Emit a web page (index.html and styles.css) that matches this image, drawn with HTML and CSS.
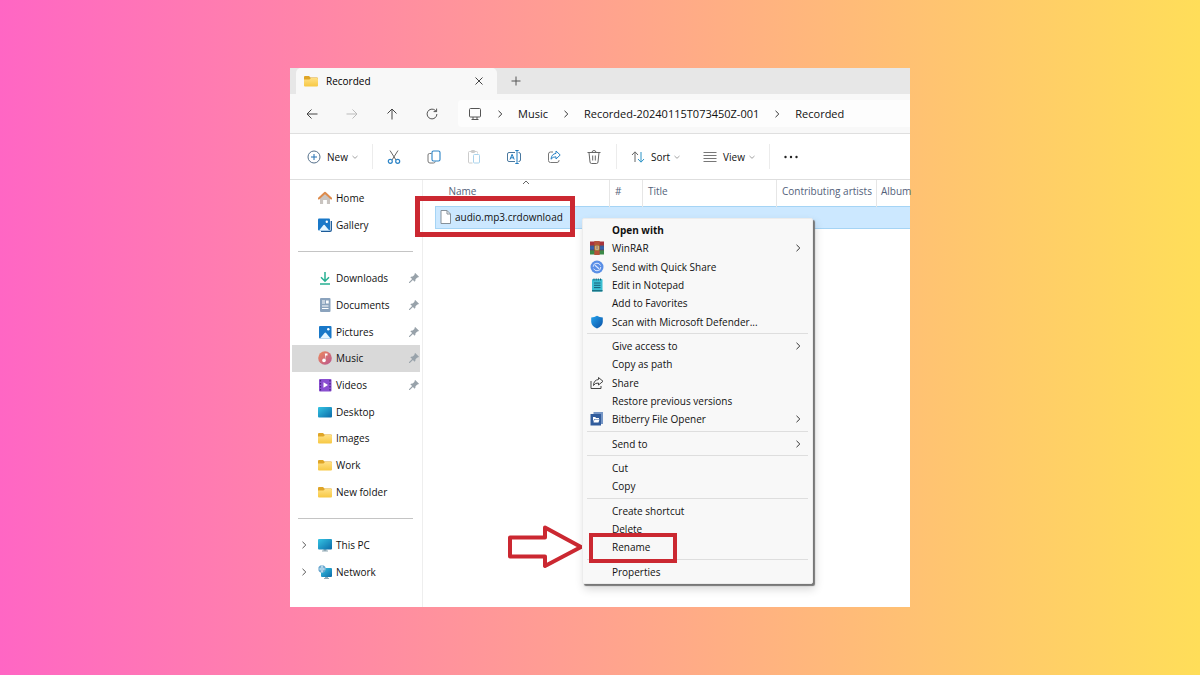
FILE: index.html
```
<!DOCTYPE html>
<html lang="en">
<head>
<meta charset="utf-8">
<title>Recorded</title>
<link rel="stylesheet" href="styles.css">
</head>
<body>
<svg class="defs" aria-hidden="true">
  <defs>
    <linearGradient id="gFolder" x1="0" y1="0" x2="0" y2="1"><stop offset="0" stop-color="#ffe085"/><stop offset="1" stop-color="#f7c843"/></linearGradient>
    <linearGradient id="gBlue" x1="0" y1="0" x2="1" y2="1"><stop offset="0" stop-color="#35c5e4"/><stop offset="1" stop-color="#0b6aa8"/></linearGradient>
    <linearGradient id="gMusic" x1="0" y1="0" x2="1" y2="1"><stop offset="0" stop-color="#ee8a5c"/><stop offset="1" stop-color="#b95590"/></linearGradient>
    <linearGradient id="gShield" x1="0" y1="0" x2="1" y2="1"><stop offset="0" stop-color="#25a4ef"/><stop offset="1" stop-color="#0a4fa3"/></linearGradient>
    <symbol id="folder" viewBox="0 0 14 14"><path d="M0 3q0-1 1-1h4l1.500 1.500H13q1 0 1 1V6H0z" fill="#dfa527"/><path d="M0 5.500h5.500L7 4h6q1 0 1 1v6.500q0 1-1 1H1q-1 0-1-1z" fill="url(#gFolder)"/></symbol>
    <symbol id="right" viewBox="0 0 10 10"><path d="M3.500 1.800 6.800 5 3.500 8.200" fill="none" stroke="currentColor" stroke-width="1"/></symbol>
    <symbol id="down" viewBox="0 0 8 8"><path d="M1.500 3 4 5.300 6.500 3" fill="none" stroke="#999" stroke-width=".9"/></symbol>
    <symbol id="pin" viewBox="0 0 12 12"><path d="M7.200 1 11 4.800 10 5.600 9.300 5.400 7.500 7.300Q7.800 8.800 6.700 9.700L4.900 7.900 1.800 11 1 11 1 10.200 4.100 7.100 2.300 5.300Q3.200 4.200 4.700 4.500L6.600 2.700 6.400 2z" fill="#98a2aa"/></symbol>
  </defs>
</svg>

<main class="stage">
  <section class="window" aria-label="File Explorer">
    <header class="tabs">
      <div class="tab">
        <svg class="ico"><use href="#folder"/></svg>
        <span class="tab-title">Recorded</span>
        <button class="tab-btn" aria-label="Close tab"><svg viewBox="0 0 10 10"><path d="M1.500 1.500l7 7M8.500 1.500l-7 7" stroke="#444" fill="none"/></svg></button>
      </div>
      <button class="tab-btn new-tab" aria-label="New tab"><svg viewBox="0 0 10 10"><path d="M5 .5v9M.5 5h9" stroke="#555" fill="none"/></svg></button>
    </header>

    <nav class="navbar" aria-label="Location">
      <button class="sq" aria-label="Back"><svg class="ico" viewBox="0 0 14 14"><path d="M12.500 7H2M6.500 2.500 2 7l4.500 4.500" stroke="#444" fill="none"/></svg></button>
      <button class="sq" aria-label="Forward" disabled><svg class="ico" viewBox="0 0 14 14"><path d="M1.500 7H12M7.500 2.500 12 7l-4.500 4.500" stroke="#bbb" fill="none"/></svg></button>
      <button class="sq" aria-label="Up"><svg class="ico" viewBox="0 0 14 14"><path d="M7 12.500V2M2.500 6.500 7 2l4.500 4.500" stroke="#444" fill="none"/></svg></button>
      <button class="sq" aria-label="Refresh"><svg class="ico" viewBox="0 0 14 14"><path d="M11.900 7A4.900 4.900 0 1 1 10.200 3.300L11.500 4.500M11.600 1.600v3h-3" stroke="#555" fill="none"/></svg></button>
      <div class="address">
        <svg class="ico" viewBox="0 0 14 14"><path d="M2.500 1.500h9q1 0 1 1v6.500q0 1-1 1h-9q-1 0-1-1V2.500q0-1 1-1zM5 10v2.500M9 10v2.500M3.500 12.500h7" stroke="#555" fill="none"/></svg>
        <svg class="sep"><use href="#right"/></svg>
        <a href="#">Music</a>
        <svg class="sep"><use href="#right"/></svg>
        <a href="#">Recorded-20240115T073450Z-001</a>
        <svg class="sep"><use href="#right"/></svg>
        <a href="#">Recorded</a>
      </div>
    </nav>

    <div class="toolbar" role="toolbar" aria-label="Commands">
      <button class="labelled"><svg class="ico" viewBox="0 0 14 14" fill="none"><circle cx="7" cy="7" r="6" stroke="#56718c"/><path d="M7 4v6M4 7h6" stroke="#2270b4"/></svg><span>New</span><svg class="chev"><use href="#down"/></svg></button>
      <span class="divider"></span>
      <button class="sq" aria-label="Cut"><svg class="big" viewBox="0 0 16 16" fill="none"><path d="M4 1.500 10 11M12 1.500 6 11" stroke="#666"/><circle cx="4.300" cy="12.300" r="2" stroke="#2b83c6" stroke-width="1.200"/><circle cx="11.700" cy="12.300" r="2" stroke="#2b83c6" stroke-width="1.200"/></svg></button>
      <button class="sq" aria-label="Copy"><svg class="big" viewBox="0 0 16 16" fill="none"><path d="M5.500 4.500h-2q-1.500 0-1.500 1.500v6q0 2 2 2h3.500q1.500 0 1.800-1.500" stroke="#777"/><rect x="6" y="2" width="8" height="10" rx="1.500" stroke="#2b83c6" stroke-width="1.100"/></svg></button>
      <button class="sq" aria-label="Paste" disabled><svg class="big" viewBox="0 0 16 16" fill="none"><path d="M6.500 14H3.500q-1 0-1-1V3.500q0-1 1-1h7q1 0 1 1v1" stroke="#ccc"/><rect x="5" y="1.500" width="4" height="2" rx="1" stroke="#ccc"/><rect x="7.500" y="5.500" width="6" height="8.500" rx="1" stroke="#a9d3ec"/></svg></button>
      <button class="sq" aria-label="Rename"><svg class="big" viewBox="0 0 16 16" fill="none"><path d="M9 3.500H3q-1.500 0-1.500 1.500v6q0 1.500 1.500 1.500h6M12.500 3.500q2 0 2 1.500v6q0 1.500-2 1.500" stroke="#49789f"/><path d="M4 10.500 6.100 5.300 8.200 10.500M4.800 8.800h2.600M9.300 1.500h3.400M11 1.500v13M9.300 14.500h3.400" stroke="#217cbf"/></svg></button>
      <button class="sq" aria-label="Share"><svg class="big" viewBox="0 0 16 16" fill="none"><path d="M7 3H4.500Q2.500 3 2.500 5v6.500q0 2 2 2H11q2 0 2-2V11" stroke="#777"/><path d="M10 2l4.200 4L10 10V7.800Q6.800 7.600 5 10.200 5.500 5 10 4.400z" stroke="#2b83c6" stroke-linejoin="round"/></svg></button>
      <button class="sq" aria-label="Delete"><svg class="big" viewBox="0 0 16 16" fill="none"><path d="M1.500 3.500h13M6 3.500Q6 1.500 8 1.500t2 2M3 3.500 4 13q.1 1.500 1.500 1.500h5q1.400 0 1.500-1.500l1-9.500M6.700 6.500v5M9.300 6.500v5" stroke="#666"/></svg></button>
      <span class="divider"></span>
      <button class="labelled"><svg class="ico" viewBox="0 0 14 14" fill="none"><path d="M4 12V2M1 5l3-3.200L7 5" stroke="#666"/><path d="M10 2v10M7 9l3 3.200L13 9" stroke="#2b93c6"/></svg><span>Sort</span><svg class="chev"><use href="#down"/></svg></button>
      <button class="labelled"><svg class="ico" viewBox="0 0 14 14"><path d="M.5 2.500h13M.5 5.500h13M.5 8.500h13M.5 11.500h13" stroke="#777"/></svg><span>View</span><svg class="chev"><use href="#down"/></svg></button>
      <span class="divider"></span>
      <button class="sq" aria-label="See more"><svg class="big" viewBox="0 0 16 16" fill="#222"><circle cx="2.500" cy="8" r="1.200"/><circle cx="8" cy="8" r="1.200"/><circle cx="13.500" cy="8" r="1.200"/></svg></button>
    </div>

    <div class="body">
      <nav class="sidebar" aria-label="Folders">
        <a class="item" href="#"><svg class="ico" viewBox="0 0 14 14"><path d="M2 6.500 7 2l5 4.500V13H8.700V9H5.300v4H2z" fill="#c9c4c0"/><path d="M5.300 9h3.400v4H5.300z" fill="#fff"/><path d="M.8 7.500 7 1.800l6.200 5.700" fill="none" stroke="#dd8b4c" stroke-width="2" stroke-linecap="round" stroke-linejoin="round"/></svg><span>Home</span></a>
        <a class="item" href="#"><svg class="ico" viewBox="0 0 14 14"><path d="M3 13.300h9q1.300 0 1.300-1.300V3" fill="none" stroke="#1b5a98" stroke-width="1.300"/><rect width="12" height="12" y=".5" rx="1" fill="#1978c8"/><path d="M1 12.500 5.500 7q.6-.6 1.200 0l4.500 5.500z" fill="#e4f5ff"/><circle cx="8.800" cy="3.800" r="1.200" fill="#fff"/></svg><span>Gallery</span></a>
        <hr>
        <a class="item" href="#"><svg class="ico" viewBox="0 0 14 14"><path d="M7 1v9M3 6.200l4 4 4-4M2 13h10" fill="none" stroke="#27b092" stroke-width="1.500"/></svg><span>Downloads</span><svg class="pin"><use href="#pin"/></svg></a>
        <a class="item" href="#"><svg class="ico" viewBox="0 0 14 14"><rect x="2" width="10.500" height="14" rx="1" fill="#8ba3bd"/><path d="M4 3h3M4 5h3M4 8h6.500M4 10.500h6.500" stroke="#fff"/><path d="M8 2.500h2.700v3H8z" fill="#fff"/></svg><span>Documents</span><svg class="pin"><use href="#pin"/></svg></a>
        <a class="item" href="#"><svg class="ico" viewBox="0 0 14 14"><rect x="1" y="1" width="12.500" height="12.500" rx="1" fill="#1978c8"/><path d="M2 13.500 6.500 8q.8-.8 1.600 0l4.500 5.500z" fill="#e4f5ff"/><circle cx="10.300" cy="4.200" r="1.200" fill="#fff"/></svg><span>Pictures</span><svg class="pin"><use href="#pin"/></svg></a>
        <a class="item current" href="#" aria-current="page"><svg class="ico" viewBox="0 0 14 14"><circle cx="7" cy="7" r="6.800" fill="url(#gMusic)"/><path d="M6.800 2.500h2.700v2H7.800v5z" fill="#fff"/><circle cx="6" cy="9.400" r="1.800" fill="#fff"/></svg><span>Music</span><svg class="pin"><use href="#pin"/></svg></a>
        <a class="item" href="#"><svg class="ico" viewBox="0 0 14 14"><rect x="1" y="1" width="12.500" height="12.500" rx="1" fill="#8a4fd0"/><path d="M2.500 2v11M12 2v11" stroke="#43277c" stroke-width="1.200" stroke-dasharray="1.500 1.500"/><path d="M5.500 4.300v5.400L10 7z" fill="#fff"/></svg><span>Videos</span><svg class="pin"><use href="#pin"/></svg></a>
        <a class="item" href="#"><svg class="ico" viewBox="0 0 14 14"><rect y="2" width="14" height="10.500" rx="1" fill="url(#gBlue)"/></svg><span>Desktop</span></a>
        <a class="item" href="#"><svg class="ico"><use href="#folder"/></svg><span>Images</span></a>
        <a class="item" href="#"><svg class="ico"><use href="#folder"/></svg><span>Work</span></a>
        <a class="item" href="#"><svg class="ico"><use href="#folder"/></svg><span>New folder</span></a>
        <hr>
        <a class="item" href="#"><svg class="expand"><use href="#right"/></svg><svg class="ico" viewBox="0 0 14 14"><path d="M5.500 11h3v1.500H10v1H4v-1h1.500z" fill="#91a9b5"/><rect y="1" width="14" height="10.500" rx="1" fill="url(#gBlue)"/></svg><span>This PC</span></a>
        <a class="item" href="#"><svg class="expand"><use href="#right"/></svg><svg class="ico" viewBox="0 0 14 14"><path d="M7 11h3v2h1v1H6v-1h1z" fill="#91a9b5"/><rect x="3" y="3" width="11" height="9" rx="1" fill="url(#gBlue)"/><circle cx="4" cy="4" r="3.700" fill="#6ba8cf"/><path d="M.5 4h7M4 .5Q1.500 4 4 7.500M4 .5Q6.500 4 4 7.500" stroke="#dcf1fb" stroke-width=".7" fill="none"/></svg><span>Network</span></a>
      </nav>

      <div class="files">
        <table>
          <colgroup><col class="c-name"><col class="c-num"><col class="c-title"><col class="c-artists"><col></colgroup>
          <thead><tr>
            <th class="name-head" aria-sort="ascending">Name<svg class="sort-mark" viewBox="0 0 8 5"><path d="M1 4 4 1l3 3" fill="none" stroke="#666"/></svg></th>
            <th>#</th><th>Title</th><th>Contributing artists</th><th class="last">Album</th>
          </tr></thead>
          <tbody><tr>
            <td class="file" colspan="5"><div class="file-name"><svg class="doc" viewBox="0 0 11 14"><path d="M1 .5h6L10.500 4v9.500H1z" fill="#fff" stroke="#86919a"/><path d="M7 .5V4h3.500" fill="none" stroke="#86919a"/></svg><span>audio.mp3.crdownload</span></div></td>
          </tr></tbody>
        </table>
        <div class="mark mark-file"></div>

        <svg class="arrow" viewBox="0 0 78 46"><path d="M3 13.500H38V3.500L74 23 38 42V32.500H3z" fill="#fff" stroke="#cb2831" stroke-width="4" stroke-linejoin="round"/></svg>

        <ul class="menu" role="menu">
          <li><button role="menuitem" class="strong"><span>Open with</span></button></li>
          <li><button role="menuitem"><svg class="mi" viewBox="0 0 14 14"><path d="M0 .5h14v4.200H0z" fill="#a9343c"/><path d="M0 4.700h14v4.400H0z" fill="#3862aa"/><path d="M0 9.100h14v4.400H0z" fill="#3c8a48"/><path d="M4.300 0h5.400v14H4.300z" fill="#b5533a"/><path d="M0 4.700h14M0 9.100h14" stroke="#53323f" stroke-width=".6"/><path d="M5 4.300h4v5H5z" fill="#f6e8c6" stroke="#a8782f"/><path d="M7 5v3.500" stroke="#693d2a"/></svg><span>WinRAR</span><svg class="more"><use href="#right"/></svg></button></li>
          <li><button role="menuitem"><svg class="mi" viewBox="0 0 14 14"><circle cx="7" cy="7" r="6.500" fill="#5a8fe6"/><circle cx="7" cy="7" r="3.800" fill="none" stroke="#dce8ff" stroke-dasharray="9.900 2"/><path d="M5 5.300 9 8.700" fill="none" stroke="#dce8ff" stroke-width="1.200"/></svg><span>Send with Quick Share</span></button></li>
          <li><button role="menuitem"><svg class="mi" viewBox="0 0 14 14"><rect x="2" y="1" width="10.500" height="12.500" rx="1" fill="#3bbfd2"/><path d="M2 12h10.500v1.500H2z" fill="#197385"/><path d="M4 5h6.500M4 7.300h6.500M4 9.600h6.500M4 .5v2M6.200.5v2M8.300.5v2M10.500.5v2" stroke="#195f78"/></svg><span>Edit in Notepad</span></button></li>
          <li><button role="menuitem"><span>Add to Favorites</span></button></li>
          <li><button role="menuitem"><svg class="mi" viewBox="0 0 14 14"><path d="M7 .8Q9.500 2.300 12.800 2.500V7Q12.500 11 7 13.500 1.500 11 1.200 7V2.500Q4.500 2.300 7 .8z" fill="url(#gShield)"/></svg><span>Scan with Microsoft Defender...</span></button></li>
          <li class="rule" role="separator"></li>
          <li><button role="menuitem"><span>Give access to</span><svg class="more"><use href="#right"/></svg></button></li>
          <li><button role="menuitem"><span>Copy as path</span></button></li>
          <li><button role="menuitem"><svg class="mi" viewBox="0 0 14 14"><path d="M1 5v7.500h10V10M8.500 1.500 13 5.300 8.500 9V7Q5 6.800 3.500 9.500 3.700 4 8.500 3.500z" fill="none" stroke="#444" stroke-linejoin="round"/></svg><span>Share</span></button></li>
          <li><button role="menuitem"><span>Restore previous versions</span></button></li>
          <li><button role="menuitem"><svg class="mi" viewBox="0 0 14 14"><path d="M3.500 0H13v12H3.500z" fill="#7696c5"/><path d="M.5 2H11v11.500H.5z" fill="#315c9c"/><path d="M3 5h2.300l.7 1h3v1H4.200L3 10zM4.500 7.500h5L8.500 10.500H3.500z" fill="#fff"/></svg><span>Bitberry File Opener</span><svg class="more"><use href="#right"/></svg></button></li>
          <li class="rule" role="separator"></li>
          <li><button role="menuitem"><span>Send to</span><svg class="more"><use href="#right"/></svg></button></li>
          <li class="rule" role="separator"></li>
          <li><button role="menuitem"><span>Cut</span></button></li>
          <li><button role="menuitem"><span>Copy</span></button></li>
          <li class="rule" role="separator"></li>
          <li><button role="menuitem"><span>Create shortcut</span></button></li>
          <li><button role="menuitem"><span>Delete</span></button></li>
          <li class="marked"><button role="menuitem"><span>Rename</span></button><div class="mark mark-rename"></div></li>
          <li class="rule" role="separator"></li>
          <li><button role="menuitem"><span>Properties</span></button></li>
        </ul>
      </div>
    </div>
  </section>
</main>
</body>
</html>
```
FILE: styles.css
```
* { box-sizing: border-box; }
body {
  margin: 0;
  font-family: "Open Sans", "Noto Sans", sans-serif;
  font-size: 10px;
  line-height: 16px;
  color: #111;
}
button {
  margin: 0;
  padding: 0;
  border: 0;
  background: none;
  font: inherit;
  color: inherit;
  display: flex;
  align-items: center;
}
a { color: inherit; text-decoration: none; }
svg { display: block; flex: none; }
.defs { position: absolute; width: 0; height: 0; }
.ico { width: 14px; height: 14px; }
.big { width: 16px; height: 16px; }

.stage {
  min-height: 100vh;
  display: grid;
  grid-template-columns: 29fr 62fr 29fr;
  align-items: center;
  background: linear-gradient(90deg, #ff66c4, #ffde59);
}
.window {
  grid-column: 2;
  min-width: 0;
  background: #fff;
}

.tabs {
  display: flex;
  align-items: stretch;
  height: 26px;
  padding-left: 6px;
  background: #e7e7e7;
}
.tab {
  display: flex;
  align-items: center;
  width: 201px;
  padding: 0 13px 0 8px;
  gap: 8px;
  background: #f8f8f8;
  border-radius: 5px 5px 0 0;
}
.tab-title { flex: 1; font-weight: 500; color: #000; }
.tab-btn svg { width: 10px; height: 10px; }
.new-tab { padding: 0 14px; }

.sq { width: 40px; height: 28px; justify-content: center; }
.navbar {
  display: flex;
  align-items: center;
  height: 40px;
  padding-left: 2px;
  background: #f8f8f8;
  border-bottom: 1px solid #dfdfdf;
}
.address {
  flex: 1;
  min-width: 0;
  display: flex;
  align-items: center;
  height: 27px;
  margin-left: 6px;
  padding-left: 10px;
  gap: 13px;
  overflow: hidden;
  background: #fdfdfd;
  border-radius: 4px 0 0 4px;
  font-size: 11px;
  white-space: nowrap;
}
.sep { width: 10px; height: 10px; color: #333; }

.toolbar {
  display: flex;
  align-items: center;
  height: 46px;
  padding-left: 17px;
  border-bottom: 1px solid #dedede;
}
.labelled { gap: 6px; margin-right: 13px; }
.labelled + .labelled { margin-left: 9px; }
.labelled .chev { margin-left: -3px; }
.chev { width: 8px; height: 8px; }
.divider { width: 1px; height: 25px; background: #ececec; }
.divider + .labelled { margin-left: 14px; }
.divider + .sq { margin-left: 1px; }
.sq + .divider { margin-left: 2px; }

.body { display: flex; min-height: 427px; }
.sidebar {
  flex: none;
  width: 133px;
  padding: 5px 2px 22px;
  display: grid;
  grid-auto-rows: 1fr;
  border-right: 1px solid #eee;
}
.sidebar hr {
  align-self: center;
  width: 115px;
  height: 1px;
  margin: 0 6px;
  border: 0;
  background: #c4c4c4;
}
.item {
  display: grid;
  grid-template-columns: 22px 14px 1fr 12px;
  align-items: center;
  padding-left: 4px;
}
.item > .ico { grid-column: 2; }
.item > span { padding-left: 4px; white-space: nowrap; }
.expand { width: 10px; height: 10px; margin-left: 3px; color: #555; }
.pin { width: 12px; height: 12px; }
.current { width: 128px; background: #d9d9d9; }

.files { position: relative; flex: 1; min-width: 0; }
.files table {
  width: calc(100% - 12px);
  margin-left: 12px;
  table-layout: fixed;
  border-collapse: collapse;
}
.c-name { width: 174px; }
.c-num { width: 33px; }
.c-title { width: 134px; }
.c-artists { width: 100px; }
th {
  position: relative;
  height: 26px;
  padding: 0 0 3px 5px;
  text-align: left;
  font-weight: 400;
  color: #53617a;
  white-space: nowrap;
  border-left: 1px solid #e6e6e6;
}
.name-head { padding-left: 13px; border-left: 0; }
.last { padding-left: 4px; }
.sort-mark { position: absolute; top: 0; left: 50%; width: 8px; height: 5px; }
.file {
  padding: 0;
  background: #cce8ff;
  border: 1px solid #a5d4f5;
  border-right: 0;
}
.file-name { display: flex; align-items: center; height: 21px; gap: 4px; padding-left: 4px; }
.doc { width: 11px; height: 14px; }

.mark { position: absolute; border: 5px solid #cb2831; pointer-events: none; }
.mark-file { left: -8px; top: 16px; width: 160px; height: 41px; }
.mark-rename { left: 6px; top: -5px; width: 88px; height: 30px; border-width: 4px; }
.arrow { position: absolute; left: 84px; top: 344px; width: 78px; height: 46px; }

.menu {
  position: absolute;
  left: 159px;
  top: 38px;
  width: 231px;
  height: 366px;
  margin: 0;
  padding: 2px 0;
  display: flex;
  flex-direction: column;
  list-style: none;
  background: #f8f8f8;
  border: 1px solid #ececec;
  border-radius: 2px;
  box-shadow: 2px 2px 1px #777, 2px 5px 10px rgba(0, 0, 0, .16);
}
.menu li { flex: 1; display: flex; min-height: 0; }
.menu li.rule { flex: 0 0 6px; align-items: center; padding: 0 4px; }
.rule::before { content: ""; flex: 1; height: 1px; background: #dedede; }
.menu button {
  flex: 1;
  display: grid;
  grid-template-columns: 14px 1fr 10px;
  column-gap: 8px;
  padding: 0 9px 0 7px;
  text-align: left;
}
.menu button > span { grid-column: 2; white-space: nowrap; }
.mi { width: 14px; height: 14px; }
.more { width: 10px; height: 10px; color: #333; }
.menu .marked { position: relative; }
.menu .strong { font-weight: 700; }
```
